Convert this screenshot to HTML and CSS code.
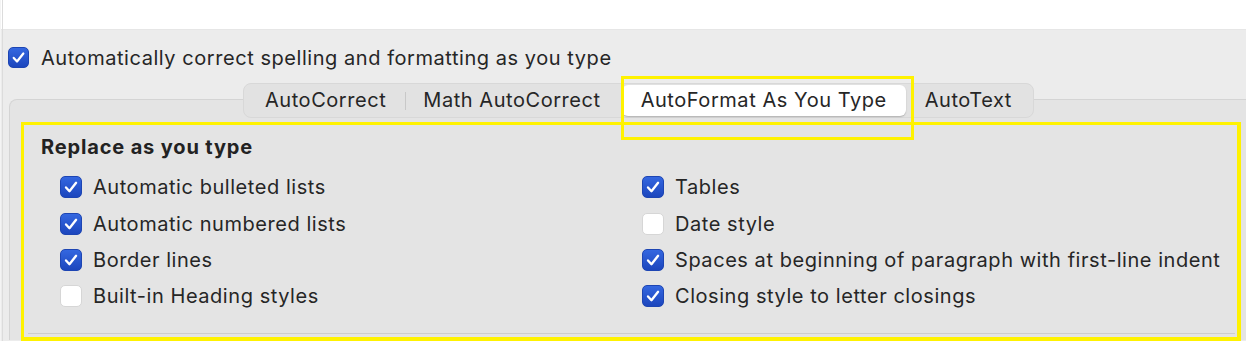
FILE: index.html
```html
<!DOCTYPE html>
<html lang="en">
<head>
    <meta charset="UTF-8">
    <meta name="viewport" content="width=device-width, initial-scale=1.0">
    <title>AutoCorrect</title>
    <link rel="stylesheet" href="styles.css">
</head>
<body>
    <div class="top"></div>

    <div class="window">
        <label class="master">
            <span class="box checked"><svg viewBox="0 0 22 22"><path d="M5.5 11.5 L9.3 15.6 L16.6 6.4"/></svg></span>
            <span>Automatically correct spelling and formatting as you type</span>
        </label>

        <div class="tabbox">
            <div class="tabs">
                <div class="tab">AutoCorrect</div>
                <div class="sep"></div>
                <div class="tab math">Math AutoCorrect</div>
                <div class="tab active">AutoFormat As You Type</div>
                <div class="tab">AutoText</div>
            </div>

            <div class="content">
                <h3>Replace as you type</h3>
                <div class="options">
                    <label class="opt"><span class="box checked"><svg viewBox="0 0 22 22"><path d="M5.5 11.5 L9.3 15.6 L16.6 6.4"/></svg></span>Automatic bulleted lists</label>
                    <label class="opt"><span class="box checked"><svg viewBox="0 0 22 22"><path d="M5.5 11.5 L9.3 15.6 L16.6 6.4"/></svg></span>Tables</label>
                    <label class="opt"><span class="box checked"><svg viewBox="0 0 22 22"><path d="M5.5 11.5 L9.3 15.6 L16.6 6.4"/></svg></span>Automatic numbered lists</label>
                    <label class="opt"><span class="box"></span>Date style</label>
                    <label class="opt"><span class="box checked"><svg viewBox="0 0 22 22"><path d="M5.5 11.5 L9.3 15.6 L16.6 6.4"/></svg></span>Border lines</label>
                    <label class="opt"><span class="box checked"><svg viewBox="0 0 22 22"><path d="M5.5 11.5 L9.3 15.6 L16.6 6.4"/></svg></span>Spaces at beginning of paragraph with first-line indent</label>
                    <label class="opt"><span class="box"></span>Built-in Heading styles</label>
                    <label class="opt"><span class="box checked"><svg viewBox="0 0 22 22"><path d="M5.5 11.5 L9.3 15.6 L16.6 6.4"/></svg></span>Closing style to letter closings</label>
                </div>
                <div class="rule"></div>
            </div>
        </div>
    </div>

    <!-- annotation boxes drawn over the screenshot -->
    <div class="mark mark-tab"></div>
    <div class="mark mark-panel"></div>
</body>
</html>
```

FILE: styles.css
```css
* { margin: 0; padding: 0; box-sizing: border-box; }
html, body { height: 100%; overflow: hidden; }
body { font-family: Inter, "Liberation Sans", Arial, sans-serif; font-size: 20px; letter-spacing: 0.55px; color: #262626; background: #ececec; position: relative; border-left: 1px solid #f4f4f4; }
body::before { content: ""; position: absolute; left: 1px; top: 0; bottom: 0; width: 1px; background: #dcdcdc; }
.top { height: 30px; background: #fff; border-bottom: 1px solid #e6e6e6; }
.window { padding: 17px 0 0 7px; }
.master { display: flex; align-items: center; gap: 12px; height: 21px; }
.master .box { width: 21px; height: 21px; }

.box { width: 22px; height: 22px; border-radius: 5px; flex: none; background: #fff; border: 1px solid #d6d6d6; display: flex; align-items: center; justify-content: center; }
.box.checked { background: linear-gradient(#3467e0, #1c46bd); border: 1px solid #1d45b3; }
.box svg { width: 100%; height: 100%; }
.box path { fill: none; stroke: #fff; stroke-width: 2.6; stroke-linecap: round; stroke-linejoin: round; }

.tabbox { margin: 31px -40px 0 1px; background: #e4e4e4; border: 1px solid #d4d4d4; border-bottom: none; border-radius: 8px 8px 0 0; height: 241px; }
.tabs { position: relative; display: flex; width: fit-content; align-items: center; margin: -17px 0 0 233px; height: 35px; padding: 0 2px; background: #e2e2e2; border: 1px solid #d8d8d8; border-radius: 8px; }
.tab { height: 31px; line-height: 31px; padding: 0 19px; white-space: nowrap; border-radius: 6px; }
.tab.math { padding-left: 17px; }
.tab.active { background: #fff; box-shadow: 0 1px 1.5px rgba(0,0,0,0.22); margin-left: 2px; }
.sep { width: 1px; height: 18px; background: #c8c8c8; }

.content { padding: 17px 0 0 31px; }
.content h3 { font-size: 20px; font-weight: 700; letter-spacing: 0.85px; line-height: 24px; color: #222; }
.options { display: grid; grid-template-columns: 582px 1fr; grid-auto-rows: 36.4px; margin: 10px 0 0 19px; }
.opt { display: flex; align-items: center; gap: 11px; white-space: nowrap; }
.rule { margin: 18px 0 0 -13px; width: 1207px; border-top: 1px solid #cdcdcd; }

.mark { position: absolute; border: 3px solid #fff200; }
.mark-tab { left: 620px; top: 76px; width: 293px; height: 64px; }
.mark-panel { left: 20px; top: 122px; width: 1220px; height: 219px; border-width: 3.5px 4px 4px 3.5px; }
```
